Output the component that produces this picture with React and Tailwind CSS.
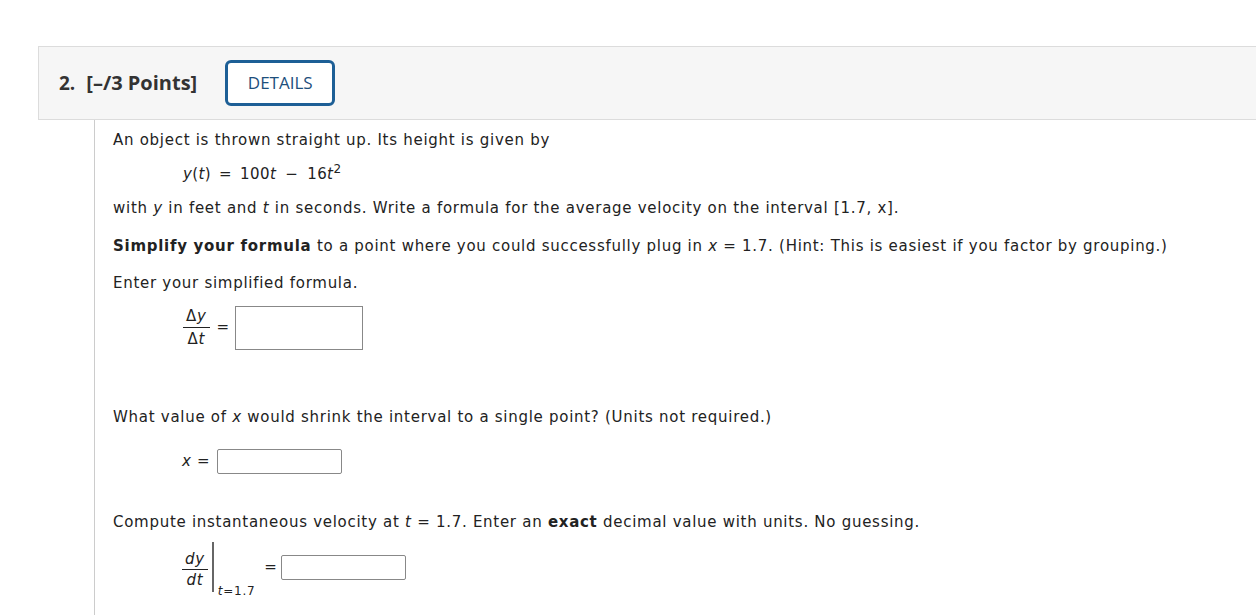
export default function App() {
  return (
    <div className="min-h-[615px] w-[1256px] overflow-hidden bg-white pt-[46px] font-['DejaVu_Sans',Verdana,sans-serif] text-[15px] text-[#222]">
      <div className="ml-[38px] flex h-[74px] items-center border border-r-0 border-[#dcdcdc] bg-[#f6f6f6] pl-[20px] font-['Open_Sans',sans-serif]">
        <span className="text-[19px] font-bold text-[#333]">2.</span>
        <span className="ml-[11px] text-[20px] font-bold text-[#333]">[–/3 Points]</span>
        <button
          type="button"
          className="ml-[28px] h-[46px] w-[110px] rounded-[6px] border-[3px] border-[#1d5f96] bg-white text-[17px] font-medium text-[#1d4f7c]"
        >
          DETAILS
        </button>
      </div>

      <div className="ml-[94px] min-h-[496px] border-l border-[#cccccc] pl-[18px] pt-[9px] tracking-[0.72px]">
        <p className="leading-[22px]">An object is thrown straight up. Its height is given by</p>
        <p className="mt-[12px] pl-[70px] leading-[22px] tracking-[0.4px]">
          <i>y</i>(<i>t</i>)<span className="mx-[8px]">=</span>100<i>t</i>
          <span className="mx-[9px]">−</span>16<i>t</i>
          <sup className="text-[12px]">2</sup>
        </p>
        <p className="mt-[12px] leading-[22px]">
          with <i>y</i> in feet and <i>t</i> in seconds. Write a formula for the average velocity on the interval [1.7, x].
        </p>
        <p className="mt-[16px] leading-[22px]">
          <b>Simplify your formula</b> to a point where you could successfully plug in <i>x</i> = 1.7. (Hint: This is easiest if you factor by grouping.)
        </p>
        <p className="mt-[15px] leading-[22px]">Enter your simplified formula.</p>

        <div className="mt-[11px] flex items-center pl-[70px]">
          <div className="flex flex-col items-center">
            <span className="border-b border-[#222] px-[3px] leading-[22px]">
              Δ<i>y</i>
            </span>
            <span className="leading-[22px]">
              Δ<i>t</i>
            </span>
          </div>
          <span className="ml-[7px]">=</span>
          <input className="ml-[5px] h-[44px] w-[128px] border border-[#888] outline-none" />
        </div>

        <p className="mt-[56px] leading-[22px]">
          What value of <i>x</i> would shrink the interval to a single point? (Units not required.)
        </p>

        <div className="mt-[21px] flex items-center pl-[69px]">
          <span>
            <i>x</i> =
          </span>
          <input className="ml-[7px] h-[25px] w-[125px] rounded-[2px] border border-[#888] outline-none" />
        </div>

        <p className="mt-[37px] leading-[22px]">
          Compute instantaneous velocity at <i>t</i> = 1.7. Enter an <b>exact</b> decimal value with units. No guessing.
        </p>

        <div className="mt-[9px] flex items-start pl-[69px]">
          <div className="mt-[7px] flex flex-col items-center">
            <span className="border-b border-[#222] px-[3px] leading-[20px]">
              <i>dy</i>
            </span>
            <span className="leading-[20px]">
              <i>dt</i>
            </span>
          </div>
          <div className="ml-[4px] h-[50px] w-[2px] bg-[#666]" />
          <span className="ml-[4px] mt-[41px] text-[12px] leading-[16px]">
            <i>t</i>=1.7
          </span>
          <span className="ml-[9px] mt-[14px] leading-[22px]">=</span>
          <input className="ml-[3px] mt-[13px] h-[25px] w-[125px] rounded-[2px] border border-[#888] outline-none" />
        </div>
      </div>
    </div>
  );
}
